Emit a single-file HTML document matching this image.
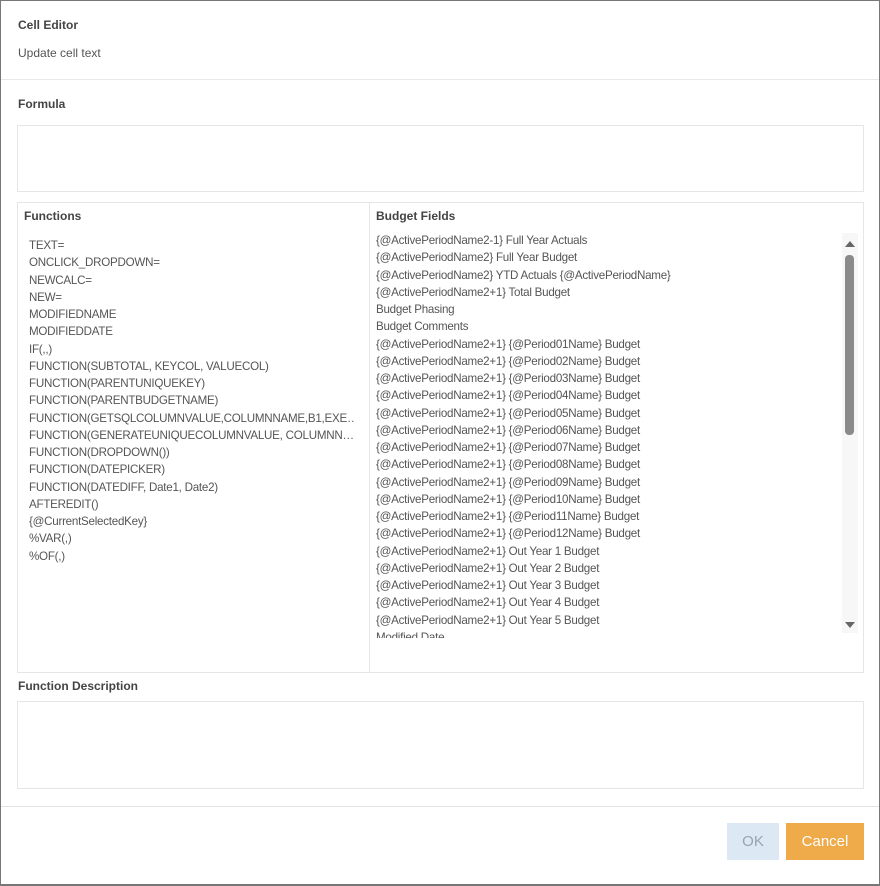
<!DOCTYPE html>
<html><head><style>
*{margin:0;padding:0;box-sizing:border-box}
html,body{width:880px;height:886px;overflow:hidden;background:#fff;font-family:"Liberation Sans",sans-serif;color:#555;font-size:12px}
.frame{position:absolute;left:0;top:0;width:880px;height:886px;border:1px solid #777;border-bottom-width:2px}
.a{position:absolute}
.b{font-weight:bold;color:#444}
.box{border:1px solid #e6e6e6}
.list div{height:17.25px;line-height:17.25px;white-space:nowrap;font-size:11.6px;letter-spacing:-0.25px}
</style></head><body>
<div class="frame"></div>
<div class="a b" style="left:18px;top:18px">Cell Editor</div>
<div class="a" style="left:18px;top:46px">Update cell text</div>
<div class="a" style="left:1px;top:79px;width:878px;height:1px;background:#e8e8e8"></div>
<div class="a b" style="left:18px;top:97px">Formula</div>
<div class="a box" style="left:17px;top:125px;width:847px;height:67px"></div>
<div class="a box" style="left:17px;top:202px;width:847px;height:471px"></div>
<div class="a" style="left:369px;top:203px;width:1px;height:469px;background:#e6e6e6"></div>
<div class="a b" style="left:24px;top:209px">Functions</div>
<div class="a b" style="left:376px;top:209px">Budget Fields</div>
<div class="a list" style="left:29px;top:237px;width:326px;overflow:hidden">
<div>TEXT=</div><div>ONCLICK_DROPDOWN=</div><div>NEWCALC=</div><div>NEW=</div><div>MODIFIEDNAME</div><div>MODIFIEDDATE</div><div>IF(,,)</div><div>FUNCTION(SUBTOTAL, KEYCOL, VALUECOL)</div><div>FUNCTION(PARENTUNIQUEKEY)</div><div>FUNCTION(PARENTBUDGETNAME)</div><div>FUNCTION(GETSQLCOLUMNVALUE,COLUMNNAME,B1,EXE…</div><div>FUNCTION(GENERATEUNIQUECOLUMNVALUE, COLUMNN…</div><div>FUNCTION(DROPDOWN())</div><div>FUNCTION(DATEPICKER)</div><div>FUNCTION(DATEDIFF, Date1, Date2)</div><div>AFTEREDIT()</div><div>{@CurrentSelectedKey}</div><div>%VAR(,)</div><div>%OF(,)</div>
</div>
<div class="a list" style="left:376px;top:232px;width:460px;height:406px;overflow:hidden">
<div>{@ActivePeriodName2-1} Full Year Actuals</div><div>{@ActivePeriodName2} Full Year Budget</div><div>{@ActivePeriodName2} YTD Actuals {@ActivePeriodName}</div><div>{@ActivePeriodName2+1} Total Budget</div><div>Budget Phasing</div><div>Budget Comments</div>
<div>{@ActivePeriodName2+1} {@Period01Name} Budget</div><div>{@ActivePeriodName2+1} {@Period02Name} Budget</div><div>{@ActivePeriodName2+1} {@Period03Name} Budget</div><div>{@ActivePeriodName2+1} {@Period04Name} Budget</div><div>{@ActivePeriodName2+1} {@Period05Name} Budget</div><div>{@ActivePeriodName2+1} {@Period06Name} Budget</div><div>{@ActivePeriodName2+1} {@Period07Name} Budget</div><div>{@ActivePeriodName2+1} {@Period08Name} Budget</div><div>{@ActivePeriodName2+1} {@Period09Name} Budget</div><div>{@ActivePeriodName2+1} {@Period10Name} Budget</div><div>{@ActivePeriodName2+1} {@Period11Name} Budget</div><div>{@ActivePeriodName2+1} {@Period12Name} Budget</div>
<div>{@ActivePeriodName2+1} Out Year 1 Budget</div><div>{@ActivePeriodName2+1} Out Year 2 Budget</div><div>{@ActivePeriodName2+1} Out Year 3 Budget</div><div>{@ActivePeriodName2+1} Out Year 4 Budget</div><div>{@ActivePeriodName2+1} Out Year 5 Budget</div><div>Modified Date</div>
</div>
<div class="a" style="left:842px;top:233px;width:16px;height:400px;background:#f7f7f7"></div>
<div class="a" style="left:845px;top:241px;width:0;height:0;border-left:5px solid transparent;border-right:5px solid transparent;border-bottom:6px solid #666"></div>
<div class="a" style="left:845px;top:255px;width:9px;height:180px;background:#8a8a8a;border-radius:4px"></div>
<div class="a" style="left:845px;top:622px;width:0;height:0;border-left:5px solid transparent;border-right:5px solid transparent;border-top:6px solid #666"></div>
<div class="a b" style="left:18px;top:679px">Function Description</div>
<div class="a box" style="left:17px;top:701px;width:847px;height:88px"></div>
<div class="a" style="left:1px;top:806px;width:878px;height:1px;background:#e3e3e3"></div>
<div class="a" style="left:727px;top:823px;width:52px;height:37px;background:#dde8f5;color:#9aa3ad;font-size:15px;text-align:center;line-height:37px">OK</div>
<div class="a" style="left:786px;top:823px;width:78px;height:37px;background:#efaa4a;color:#fff;font-size:15px;text-align:center;line-height:37px">Cancel</div>
</body></html>
